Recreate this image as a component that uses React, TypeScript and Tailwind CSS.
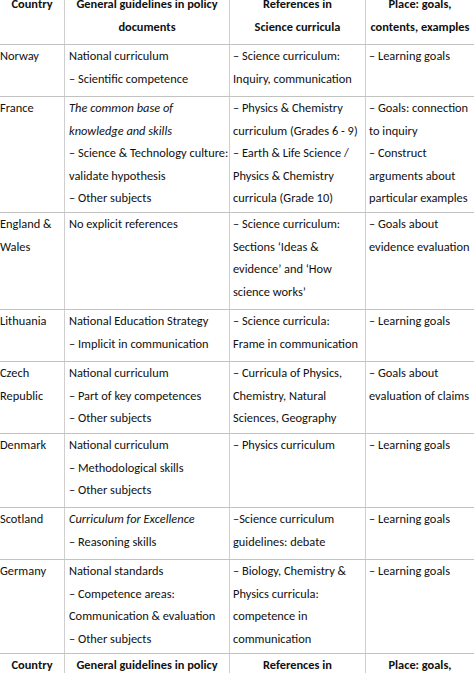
import React from "react";

type Line = string | { t: string; i: true };
type Row = { h: string; cells: Line[][] };

const it = (t: string): Line => ({ t, i: true });

const rows: Row[] = [
  { h: "h-[52px]", cells: [["Norway"], ["National curriculum", "– Scientific competence"], ["– Science curriculum:", "Inquiry, communication"], ["– Learning goals"]] },
  {
    h: "h-[116px]",
    cells: [
      ["France"],
      [it("The common base of"), it("knowledge and skills"), "– Science & Technology culture:", "validate hypothesis", "– Other subjects"],
      ["– Physics & Chemistry", "curriculum (Grades 6 - 9)", "– Earth & Life Science /", "Physics & Chemistry", "curricula (Grade 10)"],
      ["– Goals: connection", "to inquiry", "– Construct", "arguments about", "particular examples"],
    ],
  },
  {
    h: "h-[97px]",
    cells: [["England &", "Wales"], ["No explicit references"], ["– Science curriculum:", "Sections ‘Ideas &", "evidence’ and ‘How", "science works’"], ["– Goals about", "evidence evaluation"]],
  },
  { h: "h-[52px]", cells: [["Lithuania"], ["National Education Strategy", "– Implicit in communication"], ["– Science curricula:", "Frame in communication"], ["– Learning goals"]] },
  {
    h: "h-[72px]",
    cells: [["Czech", "Republic"], ["National curriculum", "– Part of key competences", "– Other subjects"], ["– Curricula of Physics,", "Chemistry, Natural", "Sciences, Geography"], ["– Goals about", "evaluation of claims"]],
  },
  { h: "h-[74px]", cells: [["Denmark"], ["National curriculum", "– Methodological skills", "– Other subjects"], ["– Physics curriculum"], ["– Learning goals"]] },
  { h: "h-[52px]", cells: [["Scotland"], [it("Curriculum for Excellence"), "– Reasoning skills"], ["–Science curriculum", "guidelines: debate"], ["– Learning goals"]] },
  {
    h: "h-[94px]",
    cells: [
      ["Germany"],
      ["National standards", "– Competence areas:", "Communication & evaluation", "– Other subjects"],
      ["– Biology, Chemistry &", "Physics curricula:", "competence in", "communication"],
      ["– Learning goals"],
    ],
  },
];

const header: string[][] = [["Country"], ["General guidelines in policy", "documents"], ["References in", "Science curricula"], ["Place: goals,", "contents, examples"]];

const padL = ["pl-0", "pl-[4px]", "pl-[3px]", "pl-[3px]"];
const borderR = ["border-r", "border-r", "border-r", ""];

function Lines({ lines }: { lines: Line[] }) {
  return (
    <>
      {lines.map((l, k) =>
        typeof l === "string" ? (
          <div key={k} className="whitespace-nowrap">{l}</div>
        ) : (
          <div key={k} className="whitespace-nowrap italic">{l.t}</div>
        )
      )}
    </>
  );
}

function HeaderRow() {
  return (
    <div className="grid grid-cols-[65px_165px_136px_1fr] h-[52px] border-b border-[#c2c2c2]">
      {header.map((c, j) => (
        <div key={j} className={`${borderR[j]} border-[#cfcfcf] text-center font-bold`}>
          <Lines lines={c} />
        </div>
      ))}
    </div>
  );
}

export default function App() {
  return (
    <div className="w-[474px] h-[673px] overflow-hidden bg-white text-[#111111] text-[12.4px] leading-[22.5px] font-['Carlito','Lato',sans-serif]">
      <div className="mt-[-7px]">
        <HeaderRow />
        {rows.map((r, i) => (
          <div key={i} className={`grid grid-cols-[65px_165px_136px_1fr] ${r.h} border-b border-[#c2c2c2]`}>
            {r.cells.map((c, j) => (
              <div key={j} className={`${borderR[j]} border-[#cfcfcf] ${padL[j]}`}>
                <Lines lines={c} />
              </div>
            ))}
          </div>
        ))}
        <HeaderRow />
      </div>
    </div>
  );
}
